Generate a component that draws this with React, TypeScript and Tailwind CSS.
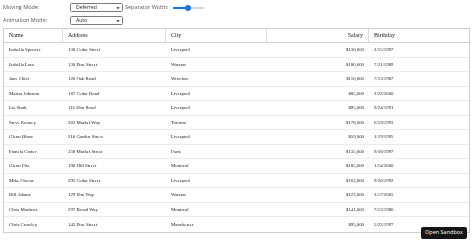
interface Person {
  name: string
  address: string
  city: string
  salary: string
  birthday: string
}

const PEOPLE: Person[] = [
  { name: 'Isabella Spencer', address: '130 Cedar Street', city: 'Liverpool', salary: '$130,000', birthday: '2/15/1997' },
  { name: 'Isabella Lane', address: '130 Pine Street', city: 'Warsaw', salary: '$180,000', birthday: '7/21/1989' },
  { name: 'Jane Chief', address: '120 Oak Road', city: 'Wroclaw', salary: '$110,000', birthday: '7/13/1987' },
  { name: 'Marisa Johnson', address: '187 Cedar Road', city: 'Liverpool', salary: '$85,000', birthday: '3/22/2000' },
  { name: 'Liz Stark', address: '116 Elm Road', city: 'Liverpool', salary: '$95,000', birthday: '9/24/1991' },
  { name: 'Steve Rooney', address: '283 Market Way', city: 'Toronto', salary: '$178,000', birthday: '6/19/1993' },
  { name: 'Glenn Blanc', address: '210 Garden Street', city: 'Liverpool', salary: '$59,000', birthday: '1/19/1995' },
  { name: 'Pamela Carter', address: '258 Market Street', city: 'Paris', salary: '$135,000', birthday: '9/18/1997' },
  { name: 'Glenn Fitz', address: '190 Hill Street', city: 'Montreal', salary: '$185,000', birthday: '1/14/2000' },
  { name: 'Mike Owens', address: '295 Cedar Street', city: 'Liverpool', salary: '$163,000', birthday: '9/20/1992' },
  { name: 'Bill Adams', address: '129 Elm Way', city: 'Warsaw', salary: '$123,000', birthday: '3/17/2005' },
  { name: 'Chris Martinez', address: '297 Broad Way', city: 'Montreal', salary: '$141,000', birthday: '7/13/1986' },
  { name: 'Chris Crowley', address: '143 Pine Street', city: 'Manchester', salary: '$95,000', birthday: '5/22/1997' },
]

const GRID = 'grid grid-cols-[59px_103px_101px_102px_102px]'

// static stand-in for a native select, so it keeps its size at this scale
function FakeSelect({ value }: { value: string }) {
  return (
    <div className="w-[53px] h-[9px] flex items-center justify-between rounded-[1.5px] border border-[#7a7a7a] bg-white pl-[5px] pr-[2px]">
      <span className="text-[5px] leading-none text-[#222]">{value}</span>
      <svg viewBox="0 0 10 10" className="w-[4px] h-[4px]">
        <path d="M1 3 L5 8 L9 3 Z" fill="#222" />
      </svg>
    </div>
  )
}

export default function App() {
  const sliderValue = 48

  return (
    <div className="w-[474px] h-[248px] bg-white relative font-['Open_Sans','Liberation_Sans',sans-serif] text-[#5a5a5a]">
      <div className="pt-[3px] pl-[3px] flex flex-col gap-[4px] will-change-transform">
        <div className="flex items-center h-[9px]">
          <span className="w-[67px] text-[5.5px] leading-none">Moving Mode:</span>
          <FakeSelect value="Deferred" />
          <span className="ml-[2px] text-[5.5px] leading-none">Separator Width:</span>
          <div className="ml-[5px] relative w-[31px] h-[6px] flex items-center">
            <div className="w-full h-[2px] rounded-full bg-[#d6d6d6]" />
            <div
              className="absolute left-0 h-[2px] rounded-full bg-[#1a73e8]"
              style={{ width: `${sliderValue}%` }}
            />
            <div
              className="absolute w-[6px] h-[6px] rounded-full bg-[#1a73e8] -translate-x-1/2"
              style={{ left: `${sliderValue}%` }}
            />
          </div>
        </div>
        <div className="flex items-center h-[9px]">
          <span className="w-[67px] text-[5.5px] leading-none">Animation Mode:</span>
          <FakeSelect value="Auto" />
        </div>
      </div>

      <div className="mt-[3px] ml-[3px] w-[467px] border border-[#cfcfcf] font-['Liberation_Serif',serif] text-[#222] will-change-transform">
        <div className={`${GRID} h-[14px] border-b border-[#cfcfcf] text-[6px] items-center`}>
          <div className="pl-[5px] h-full flex items-center border-r border-[#dedede]">Name</div>
          <div className="pl-[5px] h-full flex items-center border-r border-[#dedede]">Address</div>
          <div className="pl-[5px] h-full flex items-center border-r border-[#dedede]">City</div>
          <div className="pr-[5px] h-full flex items-center justify-end border-r border-[#dedede]">Salary</div>
          <div className="pl-[5px] h-full flex items-center">Birthday</div>
        </div>
        {PEOPLE.map((p, i) => (
          <div
            key={p.name}
            className={`${GRID} h-[14.5px] items-center text-[4.8px] ${i < PEOPLE.length - 1 ? 'border-b border-[#ececec]' : ''}`}
          >
            <div className="pl-[5px] whitespace-nowrap">{p.name}</div>
            <div className="pl-[5px] whitespace-nowrap">{p.address}</div>
            <div className="pl-[5px] whitespace-nowrap">{p.city}</div>
            <div className="pr-[5px] text-right whitespace-nowrap">{p.salary}</div>
            <div className="pl-[5px] whitespace-nowrap">{p.birthday}</div>
          </div>
        ))}
      </div>

      <button
        type="button"
        className="absolute left-[421px] top-[227px] w-[46px] h-[12px] rounded-[2px] bg-[#151515] text-white text-[5.5px] leading-none"
      >
        Open Sandbox
      </button>
    </div>
  )
}
